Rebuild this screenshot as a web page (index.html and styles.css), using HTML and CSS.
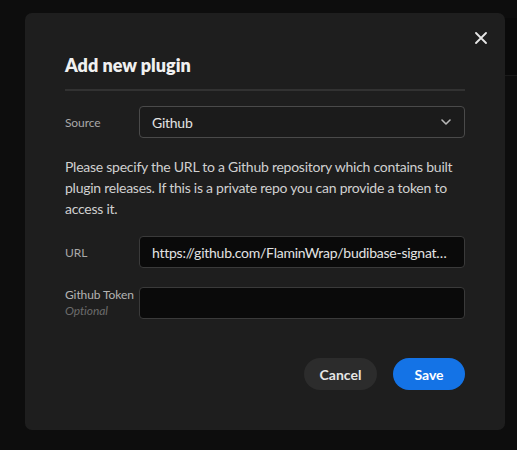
FILE: index.html
```html
<!DOCTYPE html>
<html>
<head>
<meta charset="utf-8">
<link rel="stylesheet" href="styles.css">
</head>
<body>
<div class="top-strip"></div>
<div class="modal">
  <button class="close" aria-label="Close">
    <svg width="12" height="12" viewBox="0 0 12 12"><path d="M1 1L11 11M11 1L1 11" stroke="#e6e6e6" stroke-width="1.8" stroke-linecap="round"/></svg>
  </button>
  <h2 class="title">Add new plugin</h2>
  <div class="divider"></div>
  <div class="row row-source">
    <label class="label">Source</label>
    <div class="select">
      <span>Github</span>
      <svg class="chev" width="10" height="6" viewBox="0 0 10 6"><path d="M1 1L5 5L9 1" fill="none" stroke="#b8b8b8" stroke-width="1.6" stroke-linecap="round" stroke-linejoin="round"/></svg>
    </div>
  </div>
  <p class="desc">Please specify the URL to a Github repository which contains built plugin releases. If this is a private repo you can provide a token to access it.</p>
  <div class="row row-url">
    <label class="label">URL</label>
    <div class="input"><span class="val">https://github.com/FlaminWrap/budibase-signat…</span></div>
  </div>
  <div class="row row-token">
    <label class="label label-stack">Github Token<em>Optional</em></label>
    <div class="input"></div>
  </div>
  <div class="actions">
    <button class="btn btn-cancel">Cancel</button>
    <button class="btn btn-save">Save</button>
  </div>
</div>
</body>
</html>
```
FILE: styles.css
```css
html, body {
  margin: 0;
  padding: 0;
  background: #0d0d0d;
  width: 517px;
  height: 450px;
  overflow: hidden;
  font-family: "Lato", "Liberation Sans", sans-serif;
}
body {
  position: relative;
  padding: 13px 0 0 25px;
  box-sizing: border-box;
}
.top-strip {
  position: absolute;
  right: 0;
  top: 18px;
  width: 12px;
  height: 57px;
  background: #0a0a0a;
  border-bottom: 1px solid #1a1a1a;
}
.modal {
  position: relative;
  width: 480px;
  height: 417px;
  box-sizing: border-box;
  background: #1e1e1e;
  border-radius: 7px;
  padding: 40px 40px 40px 40px;
  display: flex;
  flex-direction: column;
}
.close {
  position: absolute;
  top: 13px;
  right: 12px;
  width: 24px;
  height: 24px;
  padding: 0;
  border: 0;
  background: transparent;
  display: flex;
  align-items: center;
  justify-content: center;
}
.title {
  margin: 0;
  font-size: 18px;
  font-weight: 800;
  line-height: 24px;
  color: #f0f0f0;
}
.divider {
  margin-top: 12px;
  height: 2px;
  background: #323232;
}
.row {
  display: flex;
  align-items: center;
}
.row-source { margin-top: 15px; }
.label {
  width: 74px;
  flex: none;
  font-size: 12px;
  color: #a8a8a8;
  letter-spacing: -0.1px;
}
.select, .input {
  flex: 1;
  height: 32px;
  box-sizing: border-box;
  border-radius: 4px;
  display: flex;
  align-items: center;
  padding: 0 12px;
  font-size: 14px;
  color: #e3e3e3;
  letter-spacing: -0.25px;
}
.select {
  background: #1b1b1b;
  border: 1px solid #4a4a4a;
  justify-content: space-between;
  padding-right: 13px;
}
.input {
  background: #0a0a0a;
  border: 1px solid #3a3a3a;
  min-width: 0;
}
.val {
  white-space: nowrap;
  overflow: hidden;
}
.desc {
  margin: 18px 0 0 0;
  font-size: 14px;
  line-height: 21px;
  color: #d0d0d0;
  letter-spacing: -0.25px;
}
.row-url { margin-top: 17px; }
.row-token { margin-top: 19px; }
.label-stack {
  display: flex;
  flex-direction: column;
  line-height: 16px;
  color: #b4b4b4;
  align-self: center;
}
.label-stack em {
  color: #6b6b6b;
  font-style: italic;
}
.actions {
  margin-top: auto;
  display: flex;
  justify-content: flex-end;
  gap: 16px;
}
.btn {
  height: 32px;
  border: 0;
  border-radius: 16px;
  font-family: inherit;
  font-size: 14px;
  font-weight: 700;
  padding: 0 12px;
}
.btn-cancel {
  width: 73px;
  background: #2c2c2c;
  color: #e6e6e6;
}
.btn-save {
  width: 72px;
  background: #1473e6;
  color: #ffffff;
}
```
